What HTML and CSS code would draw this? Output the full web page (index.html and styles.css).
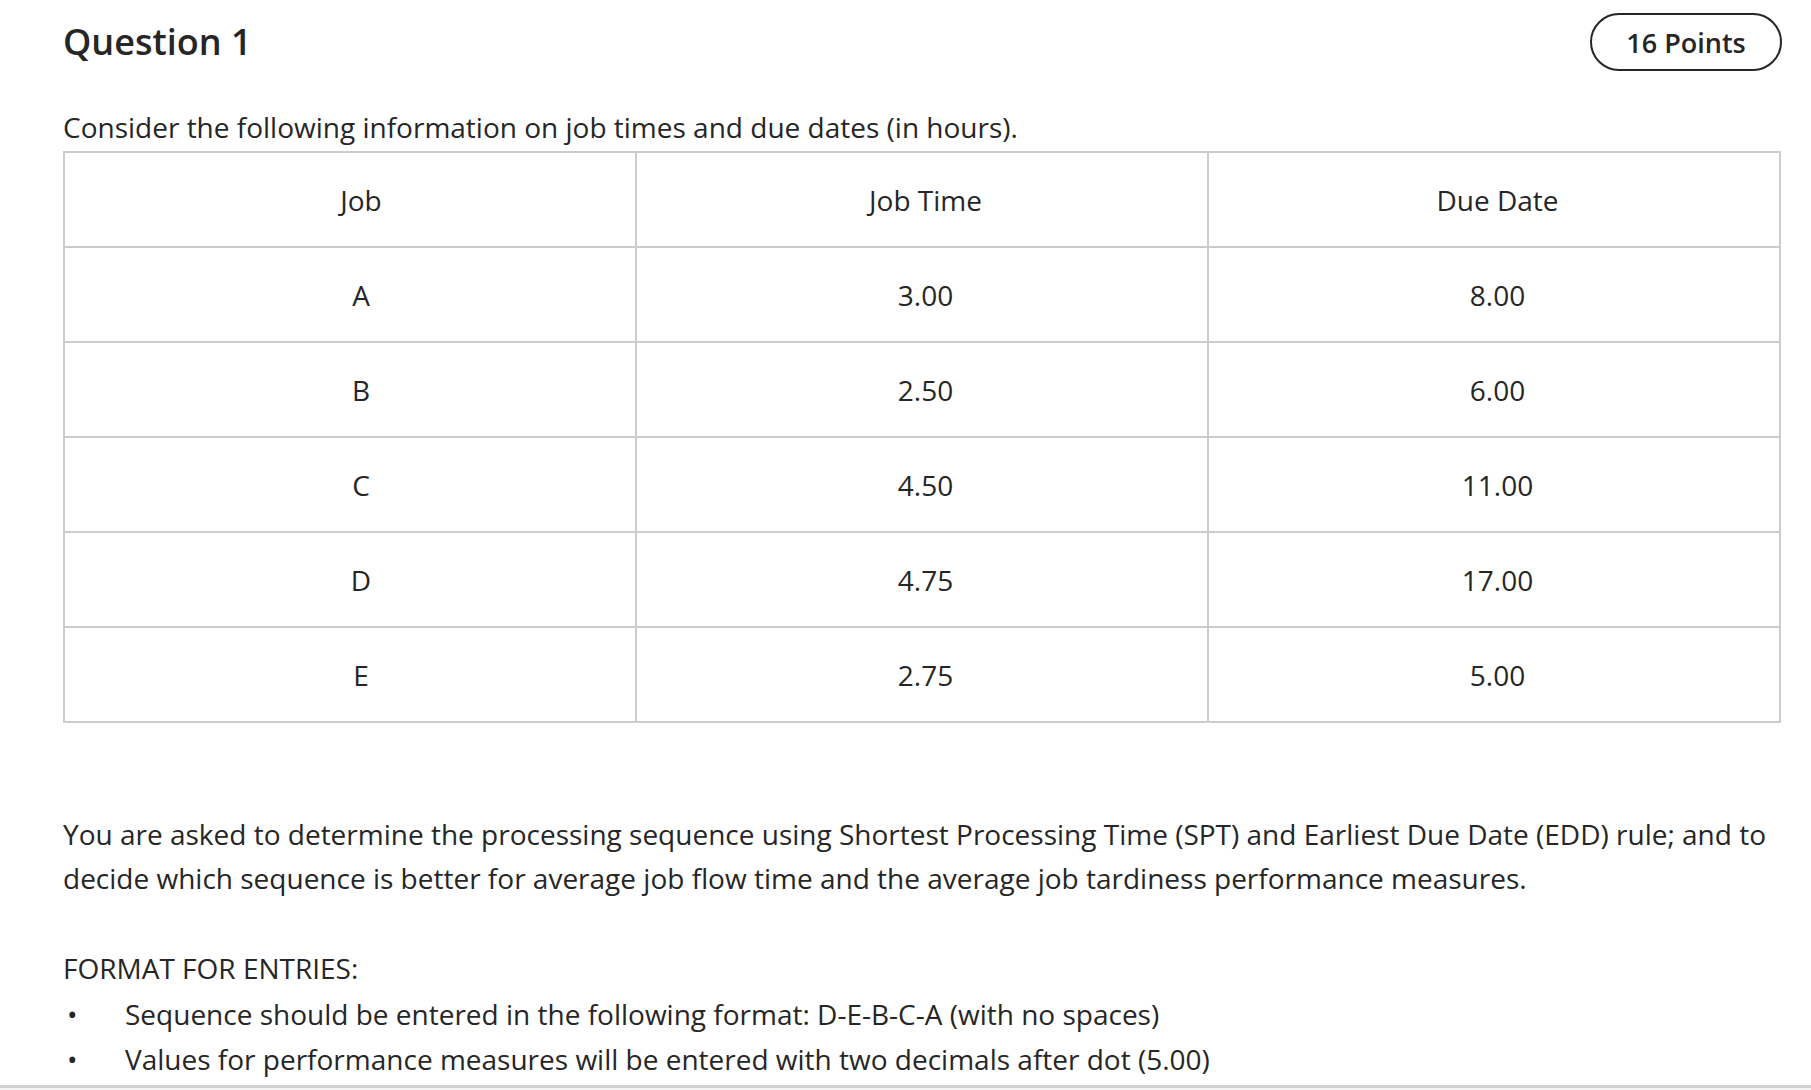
FILE: index.html
```html
<!DOCTYPE html>
<html>
<head>
<meta charset="utf-8">
<link rel="stylesheet" href="styles.css">
</head>
<body>
<div class="page">
  <div class="header">
    <h1 class="title">Question 1</h1>
    <div class="badge">16 Points</div>
  </div>
  <p class="intro">Consider the following information on job times and due dates (in hours).</p>
  <table class="jobs">
    <tr><td>Job</td><td>Job Time</td><td>Due Date</td></tr>
    <tr><td>A</td><td>3.00</td><td>8.00</td></tr>
    <tr><td>B</td><td>2.50</td><td>6.00</td></tr>
    <tr><td>C</td><td>4.50</td><td>11.00</td></tr>
    <tr><td>D</td><td>4.75</td><td>17.00</td></tr>
    <tr><td>E</td><td>2.75</td><td>5.00</td></tr>
  </table>
  <p class="task">You are asked to determine the processing sequence using Shortest Processing Time (SPT) and Earliest Due Date (EDD) rule; and to decide which sequence is better for average job flow time and the average job tardiness performance measures.</p>
  <p class="format">FORMAT FOR ENTRIES:</p>
  <ul class="rules">
    <li>Sequence should be entered in the following format: D-E-B-C-A (with no spaces)</li>
    <li>Values for performance measures will be entered with two decimals after dot (5.00)</li>
  </ul>
</div>
<div class="footer"></div>
</body>
</html>
```
FILE: styles.css
```css
html, body {
  margin: 0;
  padding: 0;
  background: #fff;
}
body {
  font-family: "Open Sans", "DejaVu Sans", sans-serif;
  color: #262626;
  height: 1090px;
  overflow: hidden;
  position: relative;
}
.page {
  padding: 13px 30px 0 63px;
}
.header {
  display: flex;
  justify-content: space-between;
  align-items: center;
}
.title {
  margin: 0;
  font-size: 36px;
  font-weight: 600;
  line-height: 58px;
}
.badge {
  box-sizing: border-box;
  height: 58px;
  width: 192px;
  border: 2px solid #262626;
  border-radius: 29px;
  font-size: 27px;
  font-weight: 600;
  display: flex;
  align-items: center;
  justify-content: center;
  margin-right: -1px;
}
.intro {
  margin: 38px 0 0 0;
  font-size: 28px;
  line-height: 36px;
}
.jobs {
  margin-top: 6px;
  width: 1718px;
  border-collapse: collapse;
  table-layout: fixed;
}
.jobs td {
  border: 2px solid #cccccc;
  height: 93px;
  padding: 0 0 0 7px;
  text-align: center;
  font-size: 28px;
  vertical-align: middle;
}
.jobs td:first-child {
  padding-left: 22px;
}
.task {
  margin: 89px 0 0 0;
  font-size: 28px;
  line-height: 44px;
}
.format {
  margin: 46px 0 0 0;
  font-size: 28px;
  line-height: 44px;
}
.rules {
  margin: 2px 0 0 0;
  padding: 0;
  list-style: none;
  font-size: 28px;
  line-height: 45px;
}
.rules li {
  display: flex;
}
.rules li::before {
  content: "\2022";
  width: 62px;
  padding-left: 4px;
  box-sizing: border-box;
  flex: none;
}
.footer {
  position: absolute;
  left: 0;
  right: 0;
  top: 1085px;
  height: 5px;
  border-top: 3px solid #d0d0d0;
  background: #f4f4f4;
}
```
